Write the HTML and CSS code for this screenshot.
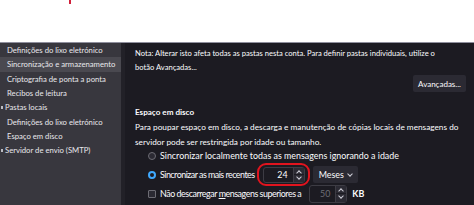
FILE: index.html
```html
<!DOCTYPE html>
<html lang="pt">
<head>
    <meta charset="UTF-8">
    <title>Sincronização e armazenamento</title>
    <link rel="stylesheet" href="styles.css">
</head>
<body>
    <div class="top">
        <span class="mark"></span>
    </div>

    <div class="window">
        <!-- Account tree -->
        <div class="sidebar">
            <div class="item sub">Definições do lixo eletrónico</div>
            <div class="item sub selected">Sincronização e armazenamento</div>
            <div class="item sub">Criptografia de ponta a ponta</div>
            <div class="item sub">Recibos de leitura</div>
            <div class="item root"><span class="twisty"></span>Pastas locais</div>
            <div class="item sub">Definições do lixo eletrónico</div>
            <div class="item sub">Espaço em disco</div>
            <div class="item root"><span class="twisty"></span>Servidor de envio (SMTP)</div>
        </div>

        <!-- Settings pane -->
        <div class="main">
            <p class="note">Nota: Alterar isto afeta todas as pastas nesta conta. Para definir pastas individuais, utilize o botão Avançadas...</p>
            <div class="actions">
                <button class="btn">Avançadas...</button>
            </div>

            <h3>Espaço em disco</h3>
            <p class="desc">Para poupar espaço em disco, a descarga e manutenção de cópias locais de mensagens do servidor pode ser restringida por idade ou tamanho.</p>

            <div class="option first">
                <span class="radio"></span>
                <span>Sincronizar localmente todas as mensagens ignorando a idade</span>
            </div>
            <div class="option">
                <span class="radio checked"></span>
                <span class="label recent">Sincronizar as mais recentes</span>
                <span class="circled">
                    <span class="number">
                        <span class="value">24</span>
                        <span class="spin"><span class="up"></span><span class="down"></span></span>
                    </span>
                </span>
                <span class="select">Meses <span class="chev"></span></span>
            </div>
            <div class="option">
                <span class="check"></span>
                <span class="label limit">Não descarregar <u>m</u>ensagens superiores a</span>
                <span class="number disabled">
                    <span class="value">50</span>
                    <span class="spin"><span class="up"></span><span class="down"></span></span>
                </span>
                <span class="unit">KB</span>
            </div>
        </div>
    </div>
</body>
</html>
```

FILE: styles.css
```css
body {
    margin: 0;
    width: 474px;
    height: 205px;
    overflow: hidden;
    font-family: Lato, "Open Sans", sans-serif;
    font-size: 8px;
    background-color: #fff;
}
.top {
    height: 42px;
    background-color: #fff;
}
.mark {
    display: block;
    margin-left: 69px;
    width: 2px;
    height: 4px;
    background-color: #d0203a;
}
.window {
    display: flex;
    height: 163px;
    border-top: 1px solid #8f8f9d;
    background-color: #1c1b22;
    color: #fbfbfe;
}
.sidebar {
    width: 121px;
    flex-shrink: 0;
    background-color: #38373e;
    font-size: 7.7px;
}
.item {
    height: 14.3px;
    line-height: 14px;
    white-space: nowrap;
    color: #e8e8ec;
    display: flex;
    align-items: center;
}
.item.sub {
    padding-left: 7px;
}
.item.root {
    padding-left: 1px;
}
.item.selected {
    background-color: #4a4950;
}
.twisty {
    width: 2px;
    height: 3px;
    margin-right: 2px;
    background-color: #bcbcc2;
}
.main {
    flex: 1;
    padding: 3px 6px 0 10px;
    border-left: 4px solid #222128;
}
.note {
    margin: 0;
    font-size: 7.6px;
    line-height: 14px;
    padding-right: 12px;
}
.actions {
    display: flex;
    justify-content: flex-end;
    padding-right: 2px;
    margin-top: 1px;
}
.btn {
    font: inherit;
    color: #fbfbfe;
    background-color: #2b2a33;
    border: none;
    border-radius: 2px;
    padding: 3px 5px;
    height: 17px;
}
h3 {
    margin: 13px 0 0;
    font-size: 8.1px;
    font-weight: 700;
    line-height: 15px;
}
.desc {
    margin: 0;
    font-size: 8.25px;
    line-height: 15px;
    padding-right: 8px;
}
.option {
    display: flex;
    align-items: center;
    padding-left: 13px;
    height: 19px;
    font-size: 8.9px;
}
.option.first {
    margin-top: -4px;
}
.radio, .check {
    width: 6px;
    height: 6px;
    border: 1px solid #6d6c74;
    border-radius: 50%;
    margin-right: 4px;
    background-color: #2b2a33;
}
.radio.checked {
    border: 2px solid #3fa9ff;
    width: 4px;
    height: 4px;
    background-color: #1c1b22;
}
.check {
    border-radius: 1px;
}
.label.recent {
    letter-spacing: -0.5px;
    margin-right: 8px;
}
.label.limit {
    letter-spacing: -0.45px;
    margin-right: 8px;
}
.circled {
    position: relative;
    margin-right: 8px;
}
.circled::after {
    content: "";
    position: absolute;
    left: -6px;
    top: -4px;
    right: -5px;
    bottom: -3px;
    border: 2px solid #e1141e;
    border-radius: 9px;
}
.number {
    display: flex;
    width: 42px;
    height: 16px;
    border: 1px solid #3d3c44;
    border-radius: 3px;
    background-color: #1c1b22;
    box-sizing: border-box;
}
.number .value {
    flex: 1;
    text-align: right;
    line-height: 14px;
    padding-right: 5px;
}
.spin {
    width: 10px;
    display: flex;
    flex-direction: column;
    border-left: 1px solid #3d3c44;
}
.spin span {
    flex: 1;
    background-color: #2b2a33;
    position: relative;
}
.spin .up {
    border-bottom: 1px solid #1c1b22;
}
.spin span::before {
    content: "";
    position: absolute;
    left: 3px;
    width: 3px;
    height: 3px;
    border-left: 1px solid #cfcfd8;
    border-top: 1px solid #cfcfd8;
}
.spin .up::before {
    top: 3px;
    transform: rotate(45deg);
}
.spin .down::before {
    top: 0;
    transform: rotate(-135deg);
}
.number.disabled {
    width: 38px;
    height: 18px;
    margin-right: 5px;
}
.number.disabled .value {
    color: #6e6d75;
    line-height: 16px;
}
.select {
    display: flex;
    align-items: center;
    background-color: #2b2a33;
    border-radius: 2px;
    height: 17px;
    padding: 0 6px;
}
.chev {
    width: 3px;
    height: 3px;
    margin-left: 4px;
    margin-top: -2px;
    border-right: 1px solid #cfcfd8;
    border-bottom: 1px solid #cfcfd8;
    transform: rotate(45deg);
}
.unit {
    font-weight: 700;
}
```
